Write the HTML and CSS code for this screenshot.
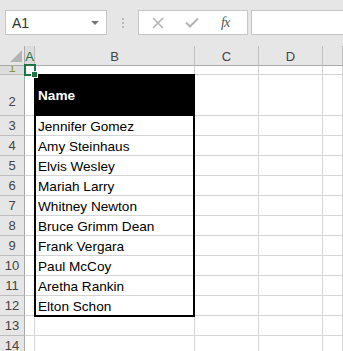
FILE: index.html
```html
<!DOCTYPE html>
<html lang="en">
<head>
    <meta charset="UTF-8">
    <meta name="viewport" content="width=device-width, initial-scale=1.0">
    <title>Names sheet</title>
    <link rel="stylesheet" href="styles.css">
</head>
<body>
    <!-- Name box and formula bar -->
    <div class="toolbar">
        <div class="name-box">
            <span>A1</span>
            <span class="caret"></span>
        </div>
        <div class="grip"><i></i><i></i><i></i></div>
        <div class="fx-buttons">
            <svg width="12" height="12" viewBox="0 0 12 12"><path d="M1 1 L11 11 M11 1 L1 11" stroke="#b3b3b3" stroke-width="1.6" fill="none"/></svg>
            <svg width="14" height="11" viewBox="0 0 14 11"><path d="M1 5.5 L5 9.5 L13 1.5" stroke="#b3b3b3" stroke-width="2" fill="none"/></svg>
            <span class="fx">fx</span>
        </div>
        <div class="formula"></div>
    </div>

    <!-- Sheet -->
    <div class="sheet">
        <div class="corner"><span class="tri"></span></div>
        <div class="col-head selected">A</div>
        <div class="col-head">B</div>
        <div class="col-head">C</div>
        <div class="col-head">D</div>
        <div class="col-head"></div>

        <div class="row-head selected small"><span>1</span></div>
        <div class="cell"></div><div class="cell"></div><div class="cell"></div><div class="cell"></div><div class="cell"></div>

        <div class="row-head tall">2</div>
        <div class="cell"></div>
        <div class="cell title">Name</div>
        <div class="cell"></div><div class="cell"></div><div class="cell"></div>

        <div class="row-head">3</div><div class="cell"></div><div class="cell">Jennifer Gomez</div><div class="cell"></div><div class="cell"></div><div class="cell"></div>
        <div class="row-head">4</div><div class="cell"></div><div class="cell">Amy Steinhaus</div><div class="cell"></div><div class="cell"></div><div class="cell"></div>
        <div class="row-head">5</div><div class="cell"></div><div class="cell">Elvis Wesley</div><div class="cell"></div><div class="cell"></div><div class="cell"></div>
        <div class="row-head">6</div><div class="cell"></div><div class="cell">Mariah Larry</div><div class="cell"></div><div class="cell"></div><div class="cell"></div>
        <div class="row-head">7</div><div class="cell"></div><div class="cell">Whitney Newton</div><div class="cell"></div><div class="cell"></div><div class="cell"></div>
        <div class="row-head">8</div><div class="cell"></div><div class="cell">Bruce Grimm Dean</div><div class="cell"></div><div class="cell"></div><div class="cell"></div>
        <div class="row-head">9</div><div class="cell"></div><div class="cell">Frank Vergara</div><div class="cell"></div><div class="cell"></div><div class="cell"></div>
        <div class="row-head">10</div><div class="cell"></div><div class="cell">Paul McCoy</div><div class="cell"></div><div class="cell"></div><div class="cell"></div>
        <div class="row-head">11</div><div class="cell"></div><div class="cell">Aretha Rankin</div><div class="cell"></div><div class="cell"></div><div class="cell"></div>
        <div class="row-head">12</div><div class="cell"></div><div class="cell">Elton Schon</div><div class="cell"></div><div class="cell"></div><div class="cell"></div>
        <div class="row-head">13</div><div class="cell"></div><div class="cell"></div><div class="cell"></div><div class="cell"></div><div class="cell"></div>
        <div class="row-head">14</div><div class="cell"></div><div class="cell"></div><div class="cell"></div><div class="cell"></div><div class="cell"></div>

        <!-- overlays: table border and active cell -->
        <div class="table-outline"></div>
        <div class="active-cell"><span class="handle"></span></div>
    </div>
</body>
</html>
```

FILE: styles.css
```css
body {
    font-family: "Liberation Sans", Arial, sans-serif;
    margin: 0;
    padding: 0;
    background-color: #e6e6e6;
    overflow: hidden;
    width: 343px;
    height: 351px;
}
.toolbar {
    height: 46px;
    display: flex;
    align-items: flex-start;
    padding-top: 10px;
    padding-left: 5px;
    box-sizing: border-box;
}
.name-box {
    width: 102px;
    height: 25px;
    box-sizing: border-box;
    background-color: #fff;
    border: 1px solid #c6c6c6;
    display: flex;
    align-items: center;
    justify-content: space-between;
    padding: 0 6px 0 6px;
    font-size: 14px;
    color: #333;
}
.caret {
    width: 0;
    height: 0;
    border-left: 4px solid transparent;
    border-right: 4px solid transparent;
    border-top: 4px solid #777;
    margin-right: 1px;
}
.grip {
    width: 31px;
    height: 25px;
    display: flex;
    flex-direction: column;
    align-items: center;
    justify-content: center;
    gap: 2px;
}
.grip i {
    width: 2px;
    height: 2px;
    background-color: #b8b8b8;
}
.fx-buttons {
    width: 110px;
    height: 25px;
    box-sizing: border-box;
    background-color: #fff;
    border: 1px solid #c6c6c6;
    display: flex;
    align-items: center;
    padding-left: 13px;
}
.fx-buttons svg:nth-child(2) {
    margin-left: 21px;
}
.fx {
    margin-left: 22px;
    font-family: "Liberation Serif", "Times New Roman", serif;
    font-style: italic;
    font-size: 14px;
    color: #555;
    letter-spacing: -1px;
}
.formula {
    margin-left: 3px;
    flex: 1;
    height: 25px;
    box-sizing: border-box;
    background-color: #fff;
    border: 1px solid #c6c6c6;
    border-right: none;
}
.sheet {
    position: relative;
    display: grid;
    grid-template-columns: 25px 10px 160px 64px 64px 1fr;
    grid-template-rows: 20px 9px 41px repeat(12, 20px);
    background-color: #fff;
    font-size: 13.6px;
}
.corner {
    background-color: #e6e6e6;
    border-right: 1px solid #ababab;
    border-bottom: 1px solid #ababab;
    position: relative;
}
.tri {
    position: absolute;
    right: 2px;
    bottom: 3px;
    width: 0;
    height: 0;
    border-left: 12px solid transparent;
    border-bottom: 12px solid #b4b4b4;
}
.col-head {
    background-color: #e6e6e6;
    border-right: 1px solid #bdbdbd;
    border-bottom: 1px solid #ababab;
    display: flex;
    align-items: center;
    justify-content: center;
    font-size: 13px;
    color: #444;
    padding-top: 1px;
}
.col-head:last-of-type {
    border-right: none;
}
.col-head.selected {
    background-color: #dcdcdc;
    color: #217346;
}
.row-head {
    background-color: #e6e6e6;
    border-right: 1px solid #ababab;
    border-bottom: 1px solid #bdbdbd;
    display: flex;
    align-items: center;
    justify-content: center;
    font-size: 13px;
    color: #444;
    overflow: hidden;
    box-sizing: border-box;
}
.row-head.small {
    align-items: flex-start;
    color: #8a9a3a;
    background-color: #dcdcdc;
}
.row-head.small span {
    line-height: 14px;
    margin-top: -5px;
}
.row-head.tall {
    align-items: flex-end;
    padding-bottom: 6px;
}
.cell {
    border-right: 1px solid #d4d4d4;
    border-bottom: 1px solid #d4d4d4;
    display: flex;
    align-items: center;
    padding-left: 3px;
    padding-top: 1px;
    color: #000;
    white-space: nowrap;
    overflow: hidden;
    box-sizing: border-box;
}
.cell.title {
    background-color: #000;
    color: #fff;
    font-weight: bold;
    align-items: flex-end;
    padding-bottom: 12px;
    border-color: #000;
}
.table-outline {
    position: absolute;
    left: 34px;
    top: 28px;
    width: 161px;
    height: 243px;
    box-sizing: border-box;
    border: 2px solid #000;
    pointer-events: none;
}
.active-cell {
    position: absolute;
    left: 24px;
    top: 18px;
    width: 12px;
    height: 12px;
    box-sizing: border-box;
    border: 2px solid #217346;
}
.handle {
    position: absolute;
    right: -4px;
    bottom: -4px;
    width: 5px;
    height: 5px;
    background-color: #217346;
    border: 1px solid #fff;
}
```
